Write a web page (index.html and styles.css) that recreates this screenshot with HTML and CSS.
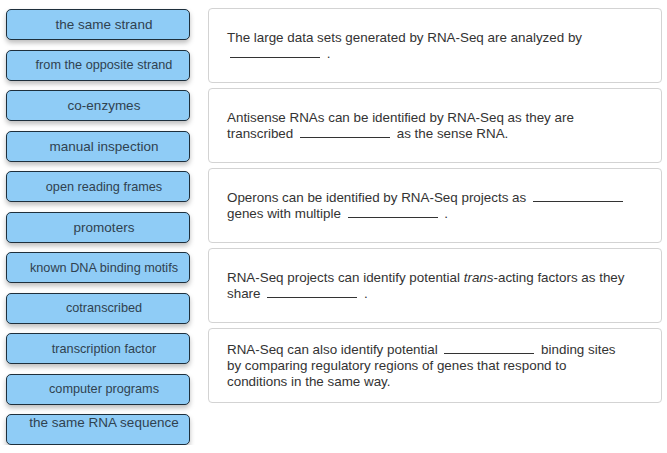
FILE: index.html
```html
<!DOCTYPE html>
<html>
<head>
<meta charset="utf-8">
<link rel="stylesheet" href="styles.css">
</head>
<body>
<div class="page">
  <div class="bank">
    <div class="tile">the same strand</div>
    <div class="tile sm">from the opposite strand</div>
    <div class="tile">co-enzymes</div>
    <div class="tile">manual inspection</div>
    <div class="tile sm">open reading frames</div>
    <div class="tile">promoters</div>
    <div class="tile sm">known DNA binding motifs</div>
    <div class="tile sm">cotranscribed</div>
    <div class="tile sm">transcription factor</div>
    <div class="tile sm">computer programs</div>
    <div class="tile high">the same RNA sequence</div>
  </div>
  <div class="questions">
    <div class="q"><p>The large data sets generated by RNA-Seq are analyzed by <span class="blank"></span> .</p></div>
    <div class="q"><p>Antisense RNAs can be identified by RNA-Seq as they are transcribed <span class="blank"></span> as the sense RNA.</p></div>
    <div class="q"><p>Operons can be identified by RNA-Seq projects as <span class="blank"></span> genes with multiple <span class="blank"></span> .</p></div>
    <div class="q"><p>RNA-Seq projects can identify potential <i>trans</i>-acting factors as they share <span class="blank"></span> .</p></div>
    <div class="q"><p>RNA-Seq can also identify potential <span class="blank"></span> binding sites by comparing regulatory regions of genes that respond to conditions in the same way.</p></div>
  </div>
</div>
</body>
</html>
```
FILE: styles.css
```css
html, body {
  margin: 0;
  padding: 0;
  background: #ffffff;
}
body {
  font-family: "Liberation Sans", Arial, sans-serif;
  color: #333333;
}
.page {
  display: flex;
  align-items: flex-start;
  gap: 18px;
  padding: 8px 0 0 6px;
}
.bank {
  width: 184px;
  display: flex;
  flex-direction: column;
  gap: 9.5px;
  padding-top: 1px;
}
.tile {
  box-sizing: border-box;
  height: 31px;
  display: flex;
  align-items: center;
  justify-content: center;
  padding-left: 12px;
  background: #8fccf6;
  border: 1px solid #1e2f3c;
  border-radius: 5px;
  box-shadow: 0 3px 5px rgba(0, 0, 0, 0.26);
  font-size: 13.5px;
  color: #2f4250;
  white-space: nowrap;
}
.tile.sm {
  font-size: 12.7px;
}
.tile.high {
  font-size: 13.5px;
  align-items: flex-start;
  padding-top: 0;
}
.questions {
  width: 454px;
  display: flex;
  flex-direction: column;
  gap: 5px;
}
.q {
  box-sizing: border-box;
  height: 75px;
  display: flex;
  align-items: center;
  border: 1px solid #d3d3d3;
  border-radius: 4px;
  padding: 0 32px 0 18px;
}
.q p {
  margin: 0;
  font-size: 13.4px;
  line-height: 16px;
  color: #333333;
}
.blank {
  display: inline-block;
  width: 90px;
  height: 0;
  margin: 0 3px;
  border-bottom: 1px solid #333333;
  vertical-align: baseline;
}
```
